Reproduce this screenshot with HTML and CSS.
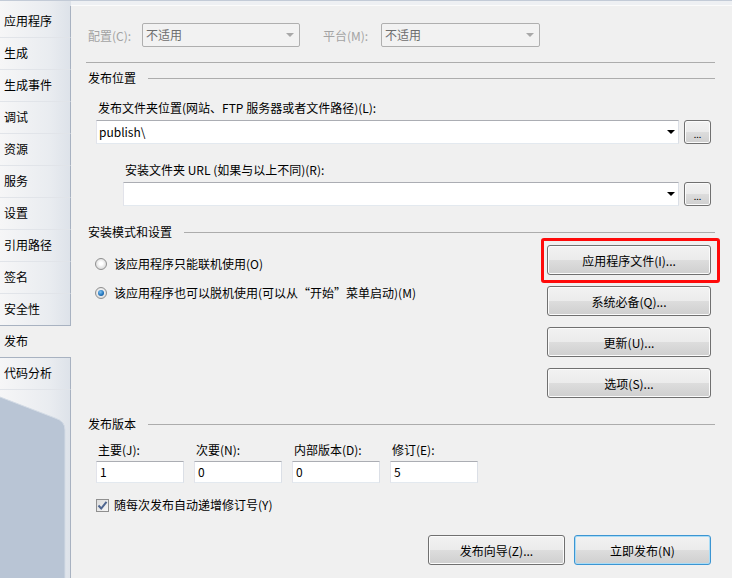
FILE: index.html
```html
<!DOCTYPE html>
<html lang="zh-CN">
<head>
  <meta charset="UTF-8" />
  <title>发布</title>
  <link rel="stylesheet" href="styles.css">
</head>
<body>
  <div class="window">
    <nav class="tabs">
      <div class="tab">应用程序</div>
      <div class="tab">生成</div>
      <div class="tab">生成事件</div>
      <div class="tab">调试</div>
      <div class="tab">资源</div>
      <div class="tab">服务</div>
      <div class="tab">设置</div>
      <div class="tab">引用路径</div>
      <div class="tab">签名</div>
      <div class="tab before-active">安全性</div>
      <div class="tab active">发布</div>
      <div class="tab">代码分析</div>
      <div class="tabs-rest">
        <svg width="66" height="200" viewBox="0 0 66 200">
          <path d="M0 7 L55 28 Q65 31 65 40 L65 200 L0 200 Z" fill="#b9c5d5" />
          <path d="M0 7 L55 28 Q65 31 65 40 L65 200" fill="none" stroke="#d3dbe5" stroke-width="1" />
        </svg>
      </div>
    </nav>

    <main class="page">
      <div class="config-row">
        <span class="label-dim cfg-label">配置(C):</span>
        <div class="combo disabled cfg-combo">不适用<span class="arrow"></span></div>
        <span class="label-dim plat-label">平台(M):</span>
        <div class="combo disabled plat-combo">不适用<span class="arrow"></span></div>
      </div>

      <div class="sep"></div>

      <div class="group-title"><span>发布位置</span></div>
      <div class="group">
        <div class="field-label first">发布文件夹位置(网站、FTP 服务器或者文件路径)(L):</div>
        <div class="combo-row">
          <div class="combo edit">publish\<span class="arrow"></span></div>
          <button class="btn small">...</button>
        </div>
        <div class="field-label indent">安装文件夹 URL (如果与以上不同)(R):</div>
        <div class="combo-row indent-box">
          <div class="combo edit"><span class="arrow"></span></div>
          <button class="btn small">...</button>
        </div>
      </div>

      <div class="group-title spaced"><span>安装模式和设置</span></div>
      <div class="group install">
        <div class="options">
          <label class="option"><span class="radio"></span>该应用程序只能联机使用(O)</label>
          <label class="option"><span class="radio checked"></span>该应用程序也可以脱机使用(可以从“开始”菜单启动)(M)</label>
        </div>
        <div class="side-buttons">
          <div class="highlight"><button class="btn">应用程序文件(I)...</button></div>
          <button class="btn">系统必备(Q)...</button>
          <button class="btn">更新(U)...</button>
          <button class="btn">选项(S)...</button>
        </div>
      </div>

      <div class="group-title spaced"><span>发布版本</span></div>
      <div class="group">
        <div class="version">
          <div class="version-part"><span>主要(J):</span><div class="textbox">1</div></div>
          <div class="version-part"><span>次要(N):</span><div class="textbox">0</div></div>
          <div class="version-part"><span>内部版本(D):</span><div class="textbox">0</div></div>
          <div class="version-part"><span>修订(E):</span><div class="textbox">5</div></div>
        </div>
        <label class="check-row">
          <span class="checkbox">
            <svg width="11" height="11" viewBox="0 0 11 11"><path d="M1.5 5.5 L4.2 8.5 L9.5 1.8" fill="none" stroke="#4f6690" stroke-width="2" /></svg>
          </span>
          随每次发布自动递增修订号(Y)
        </label>
        <div class="footer">
          <button class="btn wide">发布向导(Z)...</button>
          <button class="btn wide default">立即发布(N)</button>
        </div>
      </div>
    </main>
  </div>
</body>
</html>
```

FILE: styles.css
```css
body {
  margin: 0;
  overflow: hidden;
  font-family: "Noto Sans CJK SC", "Microsoft YaHei", sans-serif;
  font-size: 12px;
  color: #000;
}
.window {
  display: flex;
  height: 577px;
  border-top: 1px solid #c3cbd7;
  background: #eef0f3;
}

/* left tab strip */
.tabs {
  width: 71px;
  padding-top: 5px;
  display: flex;
  flex-direction: column;
  background: linear-gradient(to right, #f6f6f7, #e9ecf0 70%, #dde2e9);
}
.tab {
  box-sizing: border-box;
  height: 32px;
  line-height: 29px;
  padding-left: 4px;
  border-right: 1px solid #a8b2c1;
  border-bottom: 1px solid #e1e4e9;
  white-space: nowrap;
}
.tab.before-active {
  border-bottom-color: #a8b2c1;
}
.tab.active {
  background: #f0f0f0;
  border-right: none;
  border-bottom-color: #a8b2c1;
}
.tabs-rest {
  flex: 1;
  border-right: 1px solid #a8b2c1;
  overflow: hidden;
}
.tabs-rest svg {
  display: block;
}

/* main page */
.page {
  flex: 1;
  margin-top: 4px;
  border-top: 1px solid #fbfbfb;
  background: #f0f0f0;
  padding: 17px 17px 0 15px;
}
.config-row {
  display: flex;
  align-items: center;
  height: 24px;
}
.label-dim {
  color: #a3a3a3;
}
.cfg-label {
  width: 56px;
  padding-left: 2px;
  box-sizing: border-box;
}
.cfg-combo {
  width: 158px;
}
.plat-label {
  width: 58px;
  margin-left: 23px;
}
.plat-combo {
  width: 159px;
}
.combo {
  position: relative;
  box-sizing: border-box;
  height: 24px;
  line-height: 22px;
  padding-left: 3px;
}
.combo.disabled {
  border: 1px solid #afafaf;
  border-radius: 2px;
  background: #f2f2f2;
  color: #6d6d6d;
}
.combo.disabled .arrow {
  border-top-color: #a8a8a8;
  right: 5px;
}
.arrow {
  position: absolute;
  right: 4px;
  top: 9px;
  width: 0;
  height: 0;
  border-left: 4px solid transparent;
  border-right: 4px solid transparent;
  border-top: 4px solid #000;
}
.combo.edit {
  flex: 1;
  background: #fff;
  border: 1px solid;
  border-color: #abadb3 #dbdfe6 #e3e9ef #e2e3ea;
  padding-left: 2px;
}
.combo.edit .arrow {
  right: 3px;
}

.sep {
  margin-top: 15px;
  border-top: 1px solid #acacac;
}
.group-title {
  display: flex;
  align-items: center;
  height: 16px;
  line-height: 16px;
  margin-top: 7px;
  padding-left: 2px;
}
.group-title.spaced {
  margin-top: 18px;
}
.group-title::after {
  content: "";
  flex: 1;
  margin-left: 12px;
  border-top: 1px solid #acacac;
}
.group {
  padding: 0 4px 0 10px;
}
.field-label {
  line-height: 16px;
  margin-top: 18px;
  padding-left: 2px;
}
.field-label.first {
  margin-top: 14px;
}
.field-label.indent {
  padding-left: 29px;
}
.combo-row {
  display: flex;
  gap: 5px;
  margin-top: 4px;
}
.combo-row.indent-box {
  margin-left: 27px;
}

/* buttons */
.btn {
  box-sizing: border-box;
  height: 30px;
  border: 1px solid #707070;
  border-radius: 3px;
  background: linear-gradient(#f2f2f2, #ebebeb 50%, #dddddd 50%, #cfcfcf);
  box-shadow: inset 0 0 0 1px #fbfbfb;
  font-family: inherit;
  font-size: 12px;
  color: #000;
  padding: 0;
}
.btn.small {
  width: 27px;
  height: 24px;
  font-size: 9px;
  line-height: 12px;
  padding-top: 5px;
}
.btn.wide {
  width: 137px;
}
.btn.default {
  border-color: #3c95d2;
  box-shadow: inset 0 0 0 1px #a9dcf6;
}

.install {
  display: flex;
  justify-content: space-between;
  margin-top: 5px;
}
.options {
  padding-top: 11px;
  display: flex;
  flex-direction: column;
  gap: 13px;
}
.option {
  display: flex;
  align-items: center;
  gap: 7px;
  line-height: 16px;
  margin-left: -1px;
}
.radio {
  box-sizing: border-box;
  width: 12px;
  height: 12px;
  border-radius: 50%;
  border: 1px solid #8f8f8f;
  background: radial-gradient(circle at 50% 45%, #ffffff 20%, #e4e4e4 60%, #cfcfcf);
  display: flex;
  align-items: center;
  justify-content: center;
}
.radio.checked::after {
  content: "";
  width: 6px;
  height: 6px;
  border-radius: 50%;
  background: radial-gradient(circle at 40% 35%, #7fc3f2, #1d6fb8 60%, #0f4c87);
}
.side-buttons {
  width: 164px;
  display: flex;
  flex-direction: column;
  gap: 11px;
}
.side-buttons .btn {
  width: 164px;
}
.highlight {
  position: relative;
  height: 30px;
}
.highlight::after {
  content: "";
  position: absolute;
  top: -7px;
  left: -6px;
  right: -9px;
  bottom: -8px;
  border: 3px solid #ff0a0a;
  border-radius: 3px;
}

.version {
  display: flex;
  gap: 10px;
  margin-top: 10px;
}
.version-part {
  width: 88px;
  display: flex;
  flex-direction: column;
  gap: 3px;
}
.version-part span {
  line-height: 16px;
  padding-left: 2px;
}
.textbox {
  box-sizing: border-box;
  height: 22px;
  line-height: 20px;
  padding-left: 3px;
  background: #fff;
  border: 1px solid;
  border-color: #abadb3 #dbdfe6 #e3e9ef #e2e3ea;
}
.check-row {
  display: flex;
  align-items: center;
  gap: 5px;
  margin-top: 14px;
  line-height: 16px;
}
.checkbox {
  box-sizing: border-box;
  width: 13px;
  height: 13px;
  border: 1px solid #8f8f8f;
  background: linear-gradient(135deg, #dcdcdc, #f6f6f6);
  display: flex;
  align-items: center;
  justify-content: center;
}
.checkbox svg {
  display: block;
}
.footer {
  display: flex;
  justify-content: flex-end;
  gap: 9px;
  margin-top: 22px;
}
```
